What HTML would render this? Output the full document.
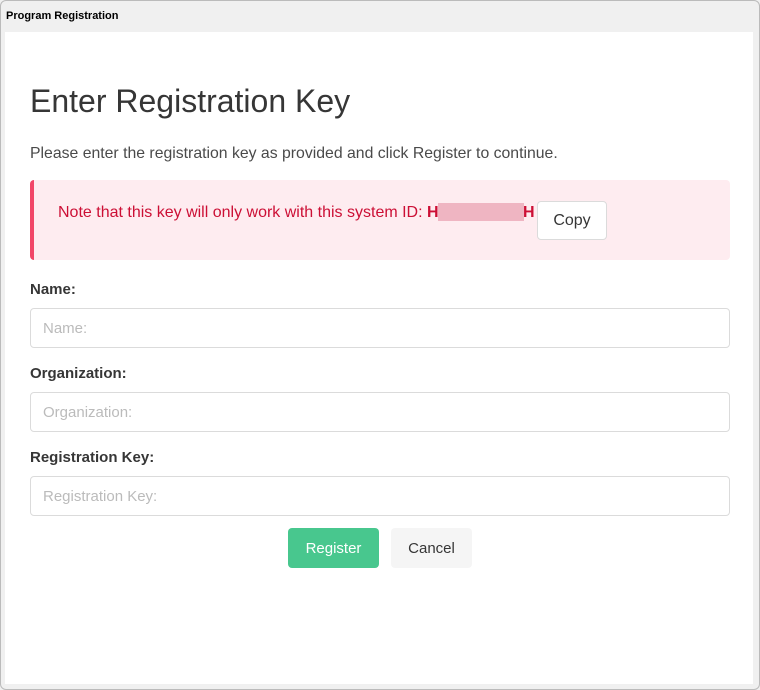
<!DOCTYPE html>
<html><head><style>
body{margin:0;width:760px;height:690px;background:#f0f0f0;font-family:"Liberation Sans",sans-serif;position:relative;overflow:hidden;color:#333}
.win{position:absolute;left:0;top:0;width:758px;height:688px;border:1px solid #bbb;border-radius:6px;background:#f0f0f0}
.tt{position:absolute;left:6px;top:10px;font-size:11px;font-weight:bold;color:#000}
.c{position:absolute;left:5px;top:32px;width:748px;height:652px;background:#fff}
h1{position:absolute;left:30px;top:83px;margin:0;font-size:32px;font-weight:normal;color:#363636;white-space:nowrap}
.p{position:absolute;left:30px;top:145px;font-size:15.8px;color:#4a4a4a;white-space:nowrap}
.al{position:absolute;left:30px;top:180px;width:696px;height:80px;background:#feecf0;border-left:4px solid #f14668;border-radius:4px}
.at{position:absolute;left:58px;top:204px;font-size:16px;color:#cc0f35;white-space:nowrap}
.h2{position:absolute;left:523px;top:204px;font-size:16px;color:#cc0f35;font-weight:bold}
.blur{position:absolute;left:438px;top:203px;width:86px;height:18px;background:#efb5c2}
.cp{position:absolute;left:537px;top:201px;width:70px;height:39px;border:1px solid #dbdbdb;border-radius:4px;background:#fff;font-size:16px;color:#363636;text-align:center;line-height:38px;box-sizing:border-box}
.l{position:absolute;left:30px;font-size:15px;font-weight:bold;color:#363636}
.in{position:absolute;left:30px;width:700px;height:40px;border:1px solid #dbdbdb;border-radius:4px;box-sizing:border-box;font-size:15px;color:#bbb;padding-left:12px;line-height:40px}
.b{position:absolute;top:528px;height:40px;border-radius:4px;font-size:15px;text-align:center;line-height:42px}
</style></head><body>
<div class="win"></div>
<div class="tt">Program Registration</div>
<div class="c"></div>
<h1>Enter Registration Key</h1>
<div class="p">Please enter the registration key as provided and click Register to continue.</div>
<div class="al"></div>
<div class="at">Note that this key will only work with this system ID: <b>H</b></div>
<div class="blur"></div>
<div class="h2">H</div>
<div class="cp">Copy</div>
<div class="l" style="top:281px">Name:</div>
<div class="in" style="top:308px">Name:</div>
<div class="l" style="top:365px">Organization:</div>
<div class="in" style="top:392px">Organization:</div>
<div class="l" style="top:449px">Registration Key:</div>
<div class="in" style="top:476px">Registration Key:</div>
<div class="b" style="left:288px;width:91px;background:#48c78e;color:#fff">Register</div>
<div class="b" style="left:391px;width:81px;background:#f5f5f5;color:#363636">Cancel</div>
</body></html>
